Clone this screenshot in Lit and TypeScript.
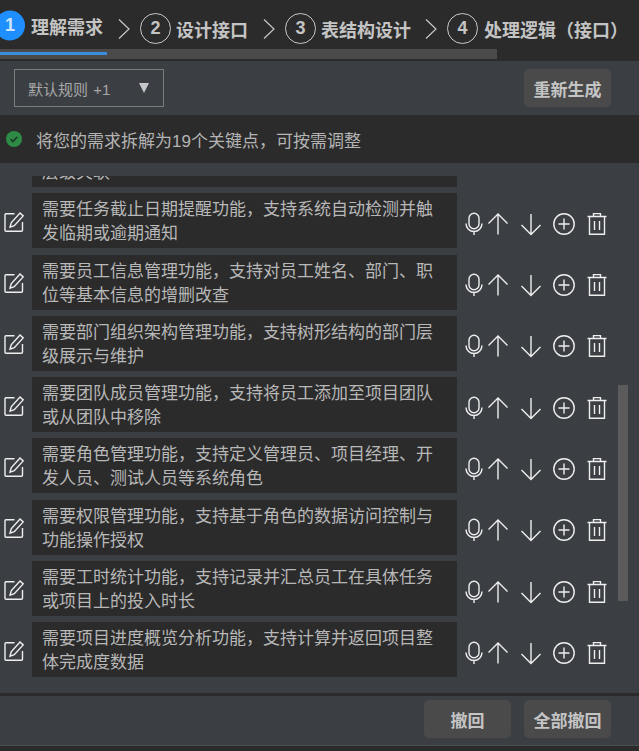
import { LitElement, html, css, svg } from "lit";
import { customElement } from "lit/decorators.js";

const rows = [
  ["层级关联"],
  ["需要任务截止日期提醒功能，支持系统自动检测并触", "发临期或逾期通知"],
  ["需要员工信息管理功能，支持对员工姓名、部门、职", "位等基本信息的增删改查"],
  ["需要部门组织架构管理功能，支持树形结构的部门层", "级展示与维护"],
  ["需要团队成员管理功能，支持将员工添加至项目团队", "或从团队中移除"],
  ["需要角色管理功能，支持定义管理员、项目经理、开", "发人员、测试人员等系统角色"],
  ["需要权限管理功能，支持基于角色的数据访问控制与", "功能操作授权"],
  ["需要工时统计功能，支持记录并汇总员工在具体任务", "或项目上的投入时长"],
  ["需要项目进度概览分析功能，支持计算并返回项目整", "体完成度数据"],
];

const icon = (w: number, body: unknown) =>
  html`<svg class="ic" width=${w} height="24" viewBox="0 0 ${w} 24" fill="none" stroke="#eeeeee" stroke-width="1.4">${body}</svg>`;

const edit = svg`<path d="M11.5 3.8H3a1 1 0 0 0-1 1v15.4a1 1 0 0 0 1 1h15.5a1 1 0 0 0 1-1V12"/><path d="M7 17.2l1.2-4.4 8.8-9.8 3.2 2.9-8.9 9.8z"/>`;
const mic = svg`<rect x="6" y="1.2" width="10" height="15.5" rx="5"/><path d="M3 11.5a8 8 0 0 0 16 0M11 19.5v3.5"/>`;
const up = svg`<path d="M12 22.5V2M2.5 11.5L12 2l9.5 9.5"/>`;
const down = svg`<path d="M12 2v20.5M2.5 13l9.5 9.5 9.5-9.5"/>`;
const plus = svg`<circle cx="12" cy="12" r="10.2"/><path d="M12 6.5v11M6.5 12h11"/>`;
const trash = svg`<path d="M2.5 4.5h19M8.5 4.5V1.6h7v2.9M4.5 4.5v17.8h15V4.5M9.5 9v9M14.5 9v9"/>`;

@customElement("app-root")
export class AppRoot extends LitElement {
  static styles = css`
    :host { display: block; width: 639px; height: 751px; overflow: hidden; background: #3b3f43; color: #c8c8c8;
      font-family: "Liberation Sans", "Noto Sans CJK SC", sans-serif; position: relative; }
    .steps { height: 49px; box-sizing: border-box; padding-top: 8px; background: #2b2b2b; display: flex; align-items: center; font-size: 18px; font-weight: 700; color: #c4c4c4; white-space: nowrap; }
    .step { display: flex; align-items: center; }
    .num { width: 31px; height: 31px; border-radius: 50%; border: 1.3px solid #c8c8c8; box-sizing: border-box; display: flex; align-items: center; justify-content: center; font-size: 18px; margin-right: 5px; flex: none; }
    .first { margin-left: -5px; transform: translateY(-3.5px); }
    .first .num { background: #1f8fff; border: none; color: #cfe4f7; width: 30px; height: 30px; margin-right: 6px; }
    .chev { flex: none; margin: 0 10px 0 15px; }
    .chev.tight { margin-left: 14px; }
    .last .num { margin-right: 6px; }
    .track-wrap { height: 12px; background: #2b2b2b; }
    .track { width: 497px; height: 10px; background: #4a4a4a; position: relative; }
    .bar { width: 107px; height: 3px; background: #3a8ee0; position: absolute; top: 3px; left: 0; }
    .tools { height: 54px; display: flex; align-items: center; justify-content: space-between; padding: 0 28px 0 14px; }
    .select { width: 150px; height: 38px; box-sizing: border-box; border: 1.5px solid #7d7d7d; display: flex; align-items: center; justify-content: space-between; padding: 0 14px 0 13px; font-size: 15px; color: #a8a8a8; word-spacing: 1px; }
    .tri { width: 0; height: 0; border-left: 5.5px solid transparent; border-right: 5.5px solid transparent; border-top: 10px solid #c8c8c8; }
    .btn { width: 87px; height: 38px; border-radius: 5px; background: #4a4a4b; display: flex; align-items: center; justify-content: center; font-size: 17px; font-weight: 700; color: #c4c4c4; }
    .notice { height: 48px; background: #2b2b2b; display: flex; align-items: center; gap: 14px; padding-left: 6px; font-size: 17px; color: #b4b4b4; }
    .ok { flex: none; }
    .list { position: absolute; top: 176px; left: 0; right: 0; height: 517px; overflow: hidden; }
    .inner { margin-top: -44px; display: flex; flex-direction: column; gap: 6.3px; }
    .row { display: flex; align-items: center; height: 55px; flex: none; }
    .ic { flex: none; display: block; }
    .edit { margin: 0 7px 0 3px; transform: translateY(1px); }
    .text { width: 425px; height: 55px; background: #2b2b2b; box-sizing: border-box; padding: 5px 0 0 10px; font-size: 17px; line-height: 24px; color: #b8b8b8; white-space: nowrap; overflow: hidden; }
    .text.tail { padding-top: 29px; }
    .acts { display: flex; align-items: center; gap: 9px; margin-left: 6px; transform: translateY(3px); }
    .acts .mic { margin-right: -8.5px; }
    .scroll { position: absolute; left: 618px; top: 385px; width: 10px; height: 216px; background: #5b5b5b; }
    .foot-line { position: absolute; top: 693px; left: 0; right: 0; height: 3px; background: #2b2b2b; }
    .foot { position: absolute; top: 696px; left: 0; right: 0; height: 50px; box-sizing: border-box; border-bottom: 1px solid #4a4d50; display: flex; gap: 13px; justify-content: flex-end; align-items: center; padding: 0 28px 3px 0; }
    .end { position: absolute; top: 746px; left: 0; right: 0; height: 5px; background: #2b2b2b; }
  `;

  private chev(tight = false) {
    return html`<svg class="chev ${tight ? "tight" : ""}" width="12" height="20" viewBox="0 0 12 20" fill="none" stroke="#c8c8c8" stroke-width="1.2"><path d="M1 .5L11 10 1 19.5"/></svg>`;
  }

  render() {
    return html`
      <div class="steps">
        <div class="step first"><span class="num">1</span>理解需求</div>
        ${this.chev()}
        <div class="step"><span class="num">2</span>设计接口</div>
        ${this.chev()}
        <div class="step"><span class="num">3</span>表结构设计</div>
        ${this.chev(true)}
        <div class="step last"><span class="num">4</span>处理逻辑（接口）</div>
      </div>
      <div class="track-wrap"><div class="track"><div class="bar"></div></div></div>
      <div class="tools">
        <div class="select"><span>默认规则 +1</span><span class="tri"></span></div>
        <div class="btn">重新生成</div>
      </div>
      <div class="notice">
        <svg class="ok" width="16" height="16" viewBox="0 0 16 16"><circle cx="8" cy="8" r="8" fill="#2e8b45"/><path d="M4.5 8.2l2.4 2.3 4.4-4.6" fill="none" stroke="#1d3a25" stroke-width="1.6"/></svg>
        <span>将您的需求拆解为19个关键点，可按需调整</span>
      </div>
      <div class="list"><div class="inner">
        ${rows.map(
          (r) => html`<div class="row">
            <span class="edit">${icon(22, edit)}</span>
            <div class="text ${r.length === 1 ? "tail" : ""}">${r.map((l) => html`<div>${l}</div>`)}</div>
            <div class="acts">
              <span class="mic">${icon(22, mic)}</span>${icon(24, up)}${icon(24, down)}${icon(24, plus)}${icon(24, trash)}
            </div>
          </div>`
        )}
      </div></div>
      <div class="scroll"></div>
      <div class="foot-line"></div>
      <div class="foot"><div class="btn">撤回</div><div class="btn">全部撤回</div></div>
      <div class="end"></div>
    `;
  }
}
